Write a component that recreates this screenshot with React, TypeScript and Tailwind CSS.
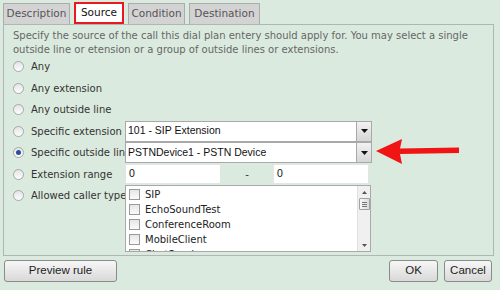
import React from "react";

const verd = { fontFamily: '"DejaVu Sans", Verdana, sans-serif' } as const;
const arial = { fontFamily: '"Liberation Sans", Arial, sans-serif' } as const;

function Radio({ checked = false }: { checked?: boolean }) {
  return (
    <span className="w-[11px] h-[11px] rounded-full border border-[#a4a9ad] bg-gradient-to-b from-[#e4e4e4] to-[#fdfdfd] flex items-center justify-center shrink-0">
      {checked && <span className="w-[5px] h-[5px] rounded-full bg-[#2a4f9a]" />}
    </span>
  );
}

function Check() {
  return <span className="w-[11px] h-[11px] border border-[#9a9a9a] bg-gradient-to-b from-[#e6e6e6] to-[#fbfbfb] shrink-0" />;
}

function Select({ value }: { value: string }) {
  return (
    <div className="w-[247px] h-[21px] bg-white border border-[#a9a9a9] flex items-center" style={arial}>
      <span className="flex-1 pl-[2px] text-[10.5px] text-[#111] whitespace-nowrap">{value}</span>
      <span className="w-[15px] h-[19px] border-l border-[#a9a9a9] bg-gradient-to-b from-[#f2f2f2] to-[#d6d6d6] flex items-center justify-center">
        <svg width="7" height="4" viewBox="0 0 7 4"><path d="M0 0h7L3.5 4z" fill="#111" /></svg>
      </span>
    </div>
  );
}

function Row({ label, checked, children }: { label: string; checked?: boolean; children?: React.ReactNode }) {
  return (
    <div className="h-[21.5px] flex items-center">
      <Radio checked={checked} />
      <span className="w-[94px] ml-[7px] overflow-hidden whitespace-nowrap text-[10px] text-[#333]">{label}</span>
      {children}
    </div>
  );
}

function Btn({ children, w }: { children: React.ReactNode; w: string }) {
  return (
    <div className={`${w} h-[22px] border border-[#8a8a8a] rounded-[3px] bg-gradient-to-b from-[#f7f7f7] to-[#d9d9d9] flex items-center justify-center text-[11.5px] text-[#222]`} style={arial}>
      {children}
    </div>
  );
}

export default function App() {
  const items = ["SIP", "EchoSoundTest", "ConferenceRoom", "MobileClient", "ChatSession"];
  return (
    <div className="w-[500px] h-[290px] bg-[#dbeade] relative overflow-hidden" style={verd}>
      <div className="flex items-end h-[24px] pl-[3px] gap-[4px]">
        <div className="h-[21px] w-[67px] bg-[#d3d3d3] border border-[#acacac] border-b-0 flex items-center justify-center text-[10.5px] text-[#555]">Description</div>
        <div className="h-[22px] w-[50px] bg-white border-[2.5px] border-[#e8191f] flex items-center justify-center text-[10.5px] text-[#111]">Source</div>
        <div className="h-[21px] w-[57px] bg-[#d3d3d3] border border-[#acacac] border-b-0 flex items-center justify-center text-[10.5px] text-[#555]">Condition</div>
        <div className="h-[21px] w-[71px] bg-[#d3d3d3] border border-[#acacac] border-b-0 flex items-center justify-center text-[10.5px] text-[#555]">Destination</div>
      </div>
      <div className="ml-[3px] w-[491px] h-[232px] border border-[#b0b6b2] pl-[9px] pt-[4px]">
        <p className="text-[10px] leading-[13.5px] text-[#666] whitespace-nowrap">
          Specify the source of the call this dial plan entery should apply for. You may select a single
          <br />
          outside line or etension or a group of outside lines or extensions.
        </p>
        <div className="flex flex-col">
          <Row label="Any" />
          <Row label="Any extension" />
          <Row label="Any outside line" />
          <Row label="Specific extension"><Select value="101 - SIP Extension" /></Row>
          <Row label="Specific outside line" checked><Select value="PSTNDevice1 - PSTN Device" /></Row>
          <Row label="Extension range">
            <div className="w-[96px] h-[20px] bg-white border border-[#e4e4e4] pl-[3px] flex items-center text-[10.5px] text-[#111]" style={arial}>0</div>
            <span className="w-[52px] text-center text-[11px] text-[#333]" style={arial}>-</span>
            <div className="w-[96px] h-[20px] bg-white border border-[#e4e4e4] pl-[3px] flex items-center text-[10.5px] text-[#111]" style={arial}>0</div>
          </Row>
          <div className="flex items-start">
            <div className="pt-[5px]"><Radio /></div>
            <span className="w-[94px] ml-[7px] pt-[3px] overflow-hidden whitespace-nowrap text-[10px] text-[#333]">Allowed caller types</span>
            <div className="w-[246px] h-[67px] bg-white border border-[#a9a9a9] flex overflow-hidden">
              <div className="flex-1 pl-[3px] pt-[1px] flex flex-col">
                {items.map((it) => (
                  <div key={it} className="h-[15px] flex items-center gap-[5px] shrink-0">
                    <Check />
                    <span className="text-[10px] text-[#222] whitespace-nowrap">{it}</span>
                  </div>
                ))}
              </div>
              <div className="w-[13px] bg-[#f0f0f0] border-l border-[#e0e0e0] flex flex-col items-center">
                <div className="h-[12px] flex items-center"><svg width="5" height="3" viewBox="0 0 5 3"><path d="M0 3h5L2.5 0z" fill="#555" /></svg></div>
                <div className="w-[11px] h-[12px] border border-[#a0a0a0] rounded-[1px] bg-gradient-to-r from-[#f8f8f8] to-[#dcdcdc] flex flex-col items-center justify-center gap-[1px]">
                  <span className="w-[5px] h-[1px] bg-[#777]" />
                  <span className="w-[5px] h-[1px] bg-[#777]" />
                  <span className="w-[5px] h-[1px] bg-[#777]" />
                </div>
                <div className="flex-1" />
                <div className="h-[12px] flex items-center"><svg width="5" height="3" viewBox="0 0 5 3"><path d="M0 0h5L2.5 3z" fill="#555" /></svg></div>
              </div>
            </div>
          </div>
        </div>
      </div>
      <div className="flex items-center mt-[4px] pl-[4px] pr-[8px]">
        <Btn w="w-[113px]">Preview rule</Btn>
        <div className="flex-1" />
        <Btn w="w-[49px]">OK</Btn>
        <div className="w-[6px]" />
        <Btn w="w-[48px]">Cancel</Btn>
      </div>
      <svg className="absolute left-[375px] top-[138px]" width="86" height="27" viewBox="0 0 86 27">
        <path d="M1 13 L27 1 L25 10.5 L84 9.5 L84 15 L25 16 L27 26 Z" fill="#f01414" />
      </svg>
    </div>
  );
}
